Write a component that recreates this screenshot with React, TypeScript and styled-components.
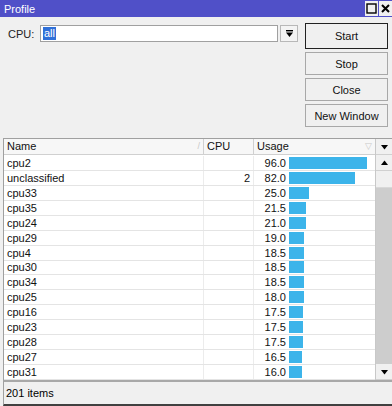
import styled, { createGlobalStyle } from 'styled-components';

interface ProfileRow {
  name: string;
  cpu?: string;
  usage: number;
}

const rows: ProfileRow[] = [
  { name: 'cpu2', usage: 96.0 },
  { name: 'unclassified', cpu: '2', usage: 82.0 },
  { name: 'cpu33', usage: 25.0 },
  { name: 'cpu35', usage: 21.5 },
  { name: 'cpu24', usage: 21.0 },
  { name: 'cpu29', usage: 19.0 },
  { name: 'cpu4', usage: 18.5 },
  { name: 'cpu30', usage: 18.5 },
  { name: 'cpu34', usage: 18.5 },
  { name: 'cpu25', usage: 18.0 },
  { name: 'cpu16', usage: 17.5 },
  { name: 'cpu23', usage: 17.5 },
  { name: 'cpu28', usage: 17.5 },
  { name: 'cpu27', usage: 16.5 },
  { name: 'cpu31', usage: 16.0 },
];

const GlobalStyle = createGlobalStyle`
  html, body {
    margin: 0;
    padding: 0;
    background: #f0f0f0;
  }
  body {
    font-family: "Liberation Sans", Arial, sans-serif;
    font-size: 11px;
    color: #000;
  }
`;

const Window = styled.div`
  width: 392px;
  height: 406px;
  display: flex;
  flex-direction: column;
  background: #f0f0f0;
  overflow: hidden;
`;

const TitleBar = styled.div`
  height: 17px;
  background: #5050c8;
  display: flex;
  align-items: center;
  justify-content: space-between;
  padding-left: 4px;
  color: #fff;
  font-size: 11px;
`;

const TitleButtons = styled.div`
  display: flex;
  gap: 1px;
  align-self: stretch;
  padding-top: 1px;
`;

const TitleButton = styled.div`
  width: 13px;
  height: 15px;
  background: #f0f0f0;
  display: flex;
  align-items: center;
  justify-content: center;
`;

const Top = styled.div`
  display: flex;
  justify-content: space-between;
  padding: 6px 4px 0 8px;
  height: 115px;
`;

const CpuRow = styled.div`
  display: flex;
  align-items: center;
  height: 17px;
  margin-top: 2px;
  font-size: 11px;
`;

const Label = styled.span`
  width: 32px;
  color: #222;
`;

const Input = styled.div`
  width: 234px;
  height: 15px;
  background: #fff;
  border: 1px solid #a0a0a0;
  display: flex;
  align-items: center;
  padding-left: 2px;
`;

const Selected = styled.span`
  background: #3070d8;
  color: #fff;
  padding: 0 1px;
  line-height: 13px;
`;

const DropButton = styled.div`
  width: 16px;
  height: 15px;
  margin-left: 2px;
  border: 1px solid #b8b8b8;
  background: #f4f4f4;
  display: flex;
  align-items: center;
  justify-content: center;
`;

const Buttons = styled.div`
  display: flex;
  flex-direction: column;
  gap: 3px;
`;

const Button = styled.div<{ $primary?: boolean }>`
  width: 81px;
  height: ${(p) => (p.$primary ? 24 : 21)}px;
  border: 1px solid ${(p) => (p.$primary ? '#222' : '#a8a8a8')};
  background: #f0f0f0;
  display: flex;
  align-items: center;
  justify-content: center;
  font-size: 11px;
  color: #111;
`;

const TableFrame = styled.div`
  margin: 0 0 0 3px;
  border-top: 1px solid #a0a0a0;
  border-left: 1px solid #a0a0a0;
  display: flex;
  height: 241px;
`;

const Table = styled.div`
  flex: 1;
  display: flex;
  flex-direction: column;
  background: #fff;
`;

const Grid = styled.div`
  display: grid;
  grid-template-columns: 200px 50px 1fr;
  height: 14px;
  border-bottom: 1px solid #e4e4e4;
  align-items: center;
`;

const HeaderRow = styled(Grid)`
  height: 15px;
  background: #f7f7f7;
  border-bottom: 1px solid #d0d0d0;
  margin-bottom: 1px;
`;

const HeadCell = styled.div<{ $last?: boolean }>`
  height: 100%;
  display: flex;
  align-items: center;
  justify-content: space-between;
  padding: 0 3px;
  border-right: ${(p) => (p.$last ? 'none' : '1px solid #d0d0d0')};
  font-size: 11px;
  color: #111;
`;

const SortMark = styled.span`
  color: #c8c8c8;
  font-size: 9px;
`;

const Cell = styled.div<{ $right?: boolean }>`
  height: 100%;
  display: flex;
  align-items: center;
  justify-content: ${(p) => (p.$right ? 'flex-end' : 'flex-start')};
  padding: 0 3px;
  border-right: 1px solid #ececec;
  font-size: 11px;
  color: #111;
`;

const UsageCell = styled.div`
  height: 100%;
  display: flex;
  align-items: center;
  font-size: 11px;
  color: #111;
`;

const UsageValue = styled.span`
  width: 32px;
  text-align: right;
  padding-right: 3px;
`;

const Bar = styled.div`
  height: 12px;
  background: #3cb4ea;
`;

const Scrollbar = styled.div`
  width: 16px;
  display: flex;
  flex-direction: column;
  border-left: 1px solid #c8c8c8;
  background: #f0f0f0;
`;

const ScrollCap = styled.div`
  height: 15px;
  display: flex;
  align-items: center;
  justify-content: center;
  border-bottom: 1px solid #d0d0d0;
`;

const ScrollTrack = styled.div`
  height: 16px;
  background: #f0f0f0;
  border-bottom: 1px solid #d8d8d8;
`;

const Thumb = styled.div`
  flex: 1;
  background: #cdcdcd;
`;

const StatusBar = styled.div`
  border-top: 2px solid #a8a8a8;
  margin-left: 3px;
  height: 22px;
  display: flex;
  align-items: center;
  padding-left: 2px;
  font-size: 11px;
  border-left: 1px solid #a0a0a0;
  border-bottom: 2px solid #404040;
`;

const Arrow = ({ up, bar }: { up?: boolean; bar?: boolean }) => (
  <svg width="9" height="8" viewBox="0 0 9 8">
    {bar && <rect x="1" y="0" width="7" height="1.4" fill="#000" />}
    <path d={up ? 'M4.5 1.5 L8 6 L1 6 Z' : bar ? 'M1 2.5 L8 2.5 L4.5 7 Z' : 'M1 2 L8 2 L4.5 6.5 Z'} fill="#000" />
  </svg>
);

export default function App() {
  return (
    <>
      <GlobalStyle />
      <Window>
        <TitleBar>
          <span>Profile</span>
          <TitleButtons>
            <TitleButton>
              <svg width="11" height="11" viewBox="0 0 11 11">
                <rect x="1" y="1" width="9" height="9" fill="none" stroke="#000" strokeWidth="1.4" />
              </svg>
            </TitleButton>
            <TitleButton>
              <svg width="11" height="11" viewBox="0 0 11 11">
                <path d="M2 2 L9 9 M9 2 L2 9" stroke="#000" strokeWidth="2" />
              </svg>
            </TitleButton>
          </TitleButtons>
        </TitleBar>
        <Top>
          <CpuRow>
            <Label>CPU:</Label>
            <Input>
              <Selected>all</Selected>
            </Input>
            <DropButton>
              <Arrow bar />
            </DropButton>
          </CpuRow>
          <Buttons>
            <Button $primary>Start</Button>
            <Button>Stop</Button>
            <Button>Close</Button>
            <Button>New Window</Button>
          </Buttons>
        </Top>
        <TableFrame>
          <Table>
            <HeaderRow>
              <HeadCell>
                Name <SortMark>/</SortMark>
              </HeadCell>
              <HeadCell>CPU</HeadCell>
              <HeadCell $last>
                Usage <SortMark>▽</SortMark>
              </HeadCell>
            </HeaderRow>
            {rows.map((r) => (
              <Grid key={r.name}>
                <Cell>{r.name}</Cell>
                <Cell $right>{r.cpu ?? ''}</Cell>
                <UsageCell>
                  <UsageValue>{r.usage.toFixed(1)}</UsageValue>
                  <Bar style={{ width: Math.round(r.usage * 0.81) }} />
                </UsageCell>
              </Grid>
            ))}
          </Table>
          <Scrollbar>
            <ScrollCap>
              <Arrow />
            </ScrollCap>
            <ScrollCap>
              <Arrow up />
            </ScrollCap>
            <ScrollTrack />
            <Thumb />
            <ScrollCap>
              <Arrow />
            </ScrollCap>
          </Scrollbar>
        </TableFrame>
        <StatusBar>201 items</StatusBar>
      </Window>
    </>
  );
}
